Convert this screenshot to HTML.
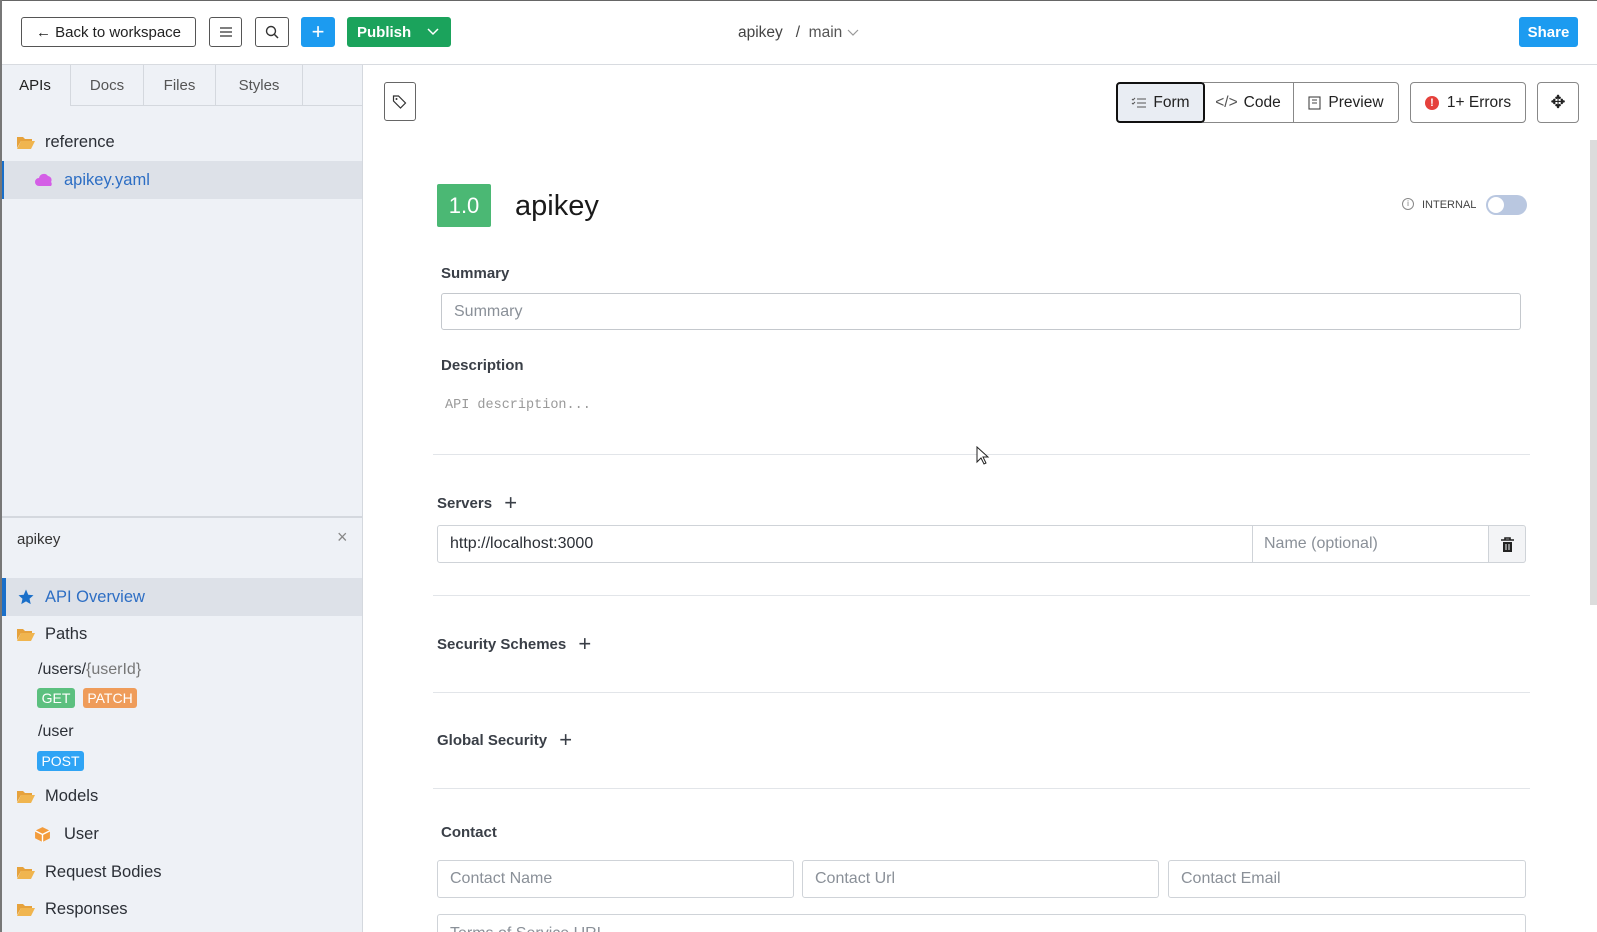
<!DOCTYPE html>
<html style="overflow:hidden;height:932px"><head><meta charset="utf-8"><style>
*{box-sizing:border-box;margin:0;padding:0}
html,body{overflow:hidden}
body{width:1597px;height:932px;overflow:hidden;background:#fff;font-family:"Liberation Sans",Arial,sans-serif;color:#1f2328;position:relative}
.a{position:absolute}
.btn{position:absolute;border:1px solid #555;border-radius:3px;background:#fff;display:flex;align-items:center;justify-content:center;font-size:15px;color:#222}
.side{position:absolute;left:0;top:65px;width:363px;height:867px;background:#eef1f6;border-right:1px solid #d4d8de}
.tab{position:absolute;top:0;height:41px;display:flex;align-items:center;justify-content:center;font-size:15px;color:#555;border-right:1px solid #d4d8de;border-bottom:1px solid #d4d8de}
.row{position:absolute;left:0;width:362px;font-size:16.5px;color:#2b2f36;display:flex;align-items:center}
.fold{position:absolute;left:17px;width:18px;height:13px}
.lbl{position:absolute;font-size:15px;font-weight:bold;color:#3a3f47}
.inp{position:absolute;border:1px solid #cfd3d8;border-radius:3px;font-size:16px;color:#8a9098;display:flex;align-items:center;padding-left:12px}
.hr{position:absolute;left:433px;width:1097px;height:1px;background:#e2e5e9}
.badge{position:absolute;height:20px;border-radius:3px;color:#fff;font-size:14px;display:flex;align-items:center;justify-content:center}
.seg{position:absolute;top:82px;height:41px;display:flex;align-items:center;justify-content:center;font-size:15.5px;color:#222;border:1px solid #888;background:#fff}
</style></head><body>
<div class="a" style="left:0;top:0;width:1597px;height:1px;background:#666"></div>
<div class="a" style="left:0;top:0;width:2px;height:932px;background:#777;z-index:5"></div>
<!-- top bar -->
<div class="btn" style="left:21px;top:17px;width:175px;height:30px">← Back to workspace</div>
<div class="btn" style="left:209px;top:17px;width:33px;height:30px"><svg width="14" height="12"><path d="M1 2h12M1 6h12M1 10h12" stroke="#333" stroke-width="1.3"/></svg></div>
<div class="btn" style="left:255px;top:17px;width:34px;height:30px"><svg width="14" height="14"><circle cx="6" cy="6" r="4.5" fill="none" stroke="#333" stroke-width="1.4"/><path d="M9.5 9.5l3.5 3.5" stroke="#333" stroke-width="1.5"/></svg></div>
<div class="btn" style="left:301px;top:17px;width:34px;height:30px;background:#1c9bf0;border-color:#1c9bf0;color:#fff;font-size:22px">+</div>
<div class="btn" style="left:347px;top:17px;width:104px;height:30px;background:#1ba35c;border-color:#1ba35c;color:#fff;font-weight:bold;justify-content:flex-start;padding-left:9px">Publish<svg style="position:absolute;right:11px" width="12" height="8"><path d="M1 1l5 5 5-5" stroke="#fff" fill="none" stroke-width="1.5"/></svg></div>
<div class="a" style="left:738px;top:24px;font-size:15.5px;color:#444">apikey &nbsp; / &nbsp;<span style="color:#555">main</span> <svg width="12" height="8"><path d="M1 1l5 5 5-5" stroke="#999" fill="none" stroke-width="1.2"/></svg></div>
<div class="btn" style="left:1519px;top:17px;width:59px;height:30px;background:#1c9bf0;border-color:#1c9bf0;color:#fff;font-weight:bold">Share</div>
<div class="a" style="left:0;top:64px;width:1597px;height:1px;background:#d8dbe0"></div>
<!-- sidebar -->
<div class="side">
 <div class="tab" style="left:0;width:71px;border-bottom:none;color:#222">APIs</div>
 <div class="tab" style="left:71px;width:73px">Docs</div>
 <div class="tab" style="left:144px;width:72px">Files</div>
 <div class="tab" style="left:216px;width:87px">Styles</div>
 <div class="tab" style="left:303px;width:60px;border-right:none"></div>
 <div class="row" style="top:59px;height:36px"><svg class="fold" style="top:12px" viewBox="0 0 18 13"><path d="M0 1h6l2 2h7v2H4L0 12z" fill="#e6a23c"/><path d="M4 5h14l-4 8H0z" fill="#f0b54f"/></svg><span style="margin-left:45px">reference</span></div>
 <div class="row" style="top:96px;height:38px;background:#dde1e8;border-left:4px solid #1a6fc9"><svg class="a" style="left:31px;top:12px" width="20" height="14"><path d="M4 13a4 4 0 0 1 0-8 5 5 0 0 1 9-2 4 4 0 0 1 3 6 3 3 0 0 1 0 4z" fill="#d45ee6"/></svg><span style="margin-left:60px;color:#2d6ec4">apikey.yaml</span></div>
 <div class="a" style="left:0;top:451px;width:362px;height:2px;background:#d4d8de"></div>
 <div class="a" style="left:17px;top:466px;font-size:15px;color:#333">apikey</div>
 <div class="a" style="left:337px;top:462px;font-size:18px;color:#888">×</div>
 <div class="row" style="top:513px;height:38px;background:#dde1e8;border-left:6px solid #1a6fc9"><svg class="a" style="left:11px;top:10px" width="18" height="18" viewBox="0 0 24 24"><path d="M12 2l3 7 7 .6-5.3 4.7 1.6 7.2L12 17.8 5.7 21.5l1.6-7.2L2 9.6 9 9z" fill="#1a6fc9"/></svg><span style="margin-left:39px;color:#2d6ec4">API Overview</span></div>
 <div class="row" style="top:552px;height:34px"><svg class="fold" style="top:11px" viewBox="0 0 18 13"><path d="M0 1h6l2 2h7v2H4L0 12z" fill="#e6a23c"/><path d="M4 5h14l-4 8H0z" fill="#f0b54f"/></svg><span style="margin-left:45px">Paths</span></div>
 <div class="a" style="left:38px;top:596px;font-size:16px;color:#2b2f36">/users/<span style="color:#777">{userId}</span></div>
 <div class="badge" style="left:37px;top:623px;width:38px;background:#5cc07f">GET</div>
 <div class="badge" style="left:83px;top:623px;width:54px;background:#ef9c5a">PATCH</div>
 <div class="a" style="left:38px;top:658px;font-size:16px;color:#2b2f36">/user</div>
 <div class="badge" style="left:37px;top:686px;width:47px;background:#2fa4f5">POST</div>
 <div class="row" style="top:714px;height:34px"><svg class="fold" style="top:11px" viewBox="0 0 18 13"><path d="M0 1h6l2 2h7v2H4L0 12z" fill="#e6a23c"/><path d="M4 5h14l-4 8H0z" fill="#f0b54f"/></svg><span style="margin-left:45px">Models</span></div>
 <div class="row" style="top:752px;height:34px"><svg class="a" style="left:34px;top:9px" width="17" height="17" viewBox="0 0 16 16"><path d="M8 1l7 3.5v7L8 15 1 11.5v-7z" fill="#f39c3c"/><path d="M8 8v7M1 4.5L8 8l7-3.5" stroke="#fff" stroke-width="1.3" fill="none"/></svg><span style="margin-left:64px">User</span></div>
 <div class="row" style="top:790px;height:34px"><svg class="fold" style="top:11px" viewBox="0 0 18 13"><path d="M0 1h6l2 2h7v2H4L0 12z" fill="#e6a23c"/><path d="M4 5h14l-4 8H0z" fill="#f0b54f"/></svg><span style="margin-left:45px">Request Bodies</span></div>
 <div class="row" style="top:827px;height:34px"><svg class="fold" style="top:11px" viewBox="0 0 18 13"><path d="M0 1h6l2 2h7v2H4L0 12z" fill="#e6a23c"/><path d="M4 5h14l-4 8H0z" fill="#f0b54f"/></svg><span style="margin-left:45px">Responses</span></div>
</div>
<!-- main toolbar -->
<div class="btn" style="left:384px;top:82px;width:32px;height:39px;border-color:#666"><svg width="16" height="16" viewBox="0 0 16 16"><path d="M1.5 2v5l7 7 5-5-7-7z" fill="none" stroke="#333" stroke-width="1.2"/><circle cx="4.5" cy="5" r="1" fill="#333"/></svg></div>
<div class="seg" style="left:1116px;width:89px;background:#e9edf3;border:2px solid #111;border-radius:4px;z-index:2"><svg width="16" height="12" style="margin-right:6px"><path d="M6 2h9M6 6h9M6 10h9M1 2l1 1 2-2M1 6l1 1 2-2" stroke="#555" fill="none" stroke-width="1"/></svg>Form</div>
<div class="seg" style="left:1203px;width:91px;border-left:none"><span style="color:#555;margin-right:6px">&lt;/&gt;</span>Code</div>
<div class="seg" style="left:1293px;width:106px;border-radius:0 4px 4px 0"><svg width="13" height="14" style="margin-right:7px"><rect x="1" y="1" width="11" height="12" fill="none" stroke="#444" stroke-width="1.1"/><path d="M4 4h5M4 7h5" stroke="#444"/></svg>Preview</div>
<div class="seg" style="left:1410px;width:116px;border-radius:4px"><span style="width:14px;height:14px;border-radius:50%;background:#e5413c;color:#fff;font-size:11px;font-weight:bold;display:inline-flex;align-items:center;justify-content:center;margin-right:8px">!</span>1+ Errors</div>
<div class="seg" style="left:1537px;width:42px;border-radius:4px;font-size:18px">✥</div>
<div class="a" style="left:1590px;top:140px;width:7px;height:465px;background:#dcdcdc"></div>
<!-- form -->
<div class="a" style="left:437px;top:184px;width:54px;height:43px;background:#4bb874;border-radius:2px;color:#fff;font-size:22px;display:flex;align-items:center;justify-content:center">1.0</div>
<div class="a" style="left:515px;top:190px;font-size:29px;color:#1a1a1a">apikey</div>
<div class="a" style="left:1402px;top:198px;width:12px;height:12px;border:1px solid #888;border-radius:50%;font-size:8px;color:#777;text-align:center;line-height:10px">i</div>
<div class="a" style="left:1422px;top:199px;font-size:11px;color:#444">INTERNAL</div>
<div class="a" style="left:1486px;top:195px;width:41px;height:20px;border-radius:10px;background:#b9c7e0"><div class="a" style="left:2px;top:2px;width:16px;height:16px;border-radius:50%;background:#fff"></div></div>
<div class="lbl" style="left:441px;top:265px">Summary</div>
<div class="inp" style="left:441px;top:293px;width:1080px;height:37px;border-color:#c4c8cd">Summary</div>
<div class="lbl" style="left:441px;top:357px">Description</div>
<div class="a" style="left:445px;top:398px;font-family:'Liberation Mono',monospace;font-size:13.5px;color:#999">API description...</div>
<div class="hr" style="top:454px"></div>
<div class="lbl" style="left:437px;top:488px">Servers <span style="font-size:22px;font-weight:normal;margin-left:8px;position:relative;top:2px">+</span></div>
<div class="inp" style="left:437px;top:525px;width:816px;height:38px;color:#2b2f36;border-radius:3px 0 0 3px">http://localhost:3000</div>
<div class="inp" style="left:1252px;top:525px;width:237px;height:38px;border-radius:0;border-left:none">Name (optional)</div>
<div class="a" style="left:1488px;top:525px;width:38px;height:38px;border:1px solid #cfd3d8;background:#f3f4f6;border-radius:0 3px 3px 0;display:flex;align-items:center;justify-content:center"><svg width="13" height="15"><path d="M0 3h13M4 3V1h5v2" stroke="#222" stroke-width="1.6" fill="none"/><path d="M2 5h9v10H2z" fill="#222"/><path d="M5 7v6M8 7v6" stroke="#f3f4f6"/></svg></div>
<div class="hr" style="top:595px"></div>
<div class="lbl" style="left:437px;top:629px">Security Schemes <span style="font-size:22px;font-weight:normal;margin-left:8px;position:relative;top:2px">+</span></div>
<div class="hr" style="top:692px"></div>
<div class="lbl" style="left:437px;top:725px">Global Security <span style="font-size:22px;font-weight:normal;margin-left:8px;position:relative;top:2px">+</span></div>
<div class="hr" style="top:788px"></div>
<div class="lbl" style="left:441px;top:824px">Contact</div>
<div class="inp" style="left:437px;top:860px;width:357px;height:38px">Contact Name</div>
<div class="inp" style="left:802px;top:860px;width:357px;height:38px">Contact Url</div>
<div class="inp" style="left:1168px;top:860px;width:358px;height:38px">Contact Email</div>
<div class="inp" style="left:437px;top:914px;width:1089px;height:18px;border-bottom:none;border-radius:3px 3px 0 0;align-items:flex-start;padding-top:10px;overflow:hidden">Terms of Service URL</div>
<svg class="a" style="left:976px;top:446px" width="14" height="20"><path d="M1 1v15l4-4 3 6 2-1-3-6h5z" fill="#fff" stroke="#222" stroke-width="1"/></svg>
</body></html>
